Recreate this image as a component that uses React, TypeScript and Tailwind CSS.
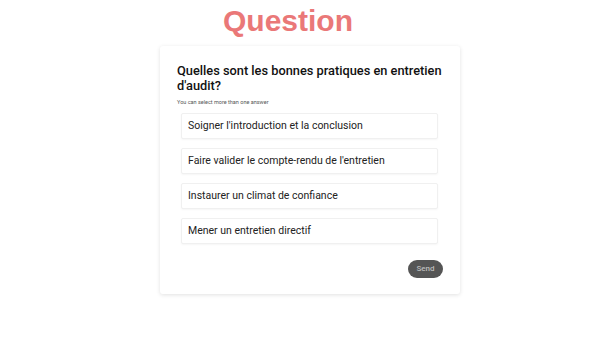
import { useState } from "react";

const options = [
  "Soigner l'introduction et la conclusion",
  "Faire valider le compte-rendu de l'entretien",
  "Instaurer un climat de confiance",
  "Mener un entretien directif",
];

export default function App() {
  const [selected, setSelected] = useState<number[]>([]);

  const toggle = (i: number) =>
    setSelected((s) => (s.includes(i) ? s.filter((x) => x !== i) : [...s, i]));

  return (
    <div className="w-[600px] h-[338px] bg-white overflow-hidden flex flex-col items-center font-['Roboto',sans-serif]">
      {/* Title */}
      <div className="w-full flex justify-center pr-[24px] pt-[2px]">
        <h1 className="font-['Liberation_Sans',Arial,sans-serif] font-bold text-[30px] leading-[38px] text-[#ea7878]">
          Question
        </h1>
      </div>

      {/* Card */}
      <div className="w-full flex justify-center pl-[20px] mt-[6px]">
        <div className="w-[300px] h-[248px] bg-white rounded-[3px] shadow-[0_1px_4px_rgba(0,0,0,0.12)] pl-[17px] pr-[14px] pt-[17px]">
          <p className="text-[12.8px] leading-[15px] font-medium text-[#111]">
            Quelles sont les bonnes pratiques en entretien d'audit?
          </p>
          <p className="text-[5.5px] leading-[8px] text-[#555] mt-[5px]">
            You can select more than one answer
          </p>

          <div className="flex flex-col gap-[9px] mt-[7px] pl-[4px] pr-[8px]">
            {options.map((opt, i) => (
              <button
                key={opt}
                onClick={() => toggle(i)}
                className={`h-[26px] w-full text-left px-[6px] text-[10.5px] text-[#222] rounded-[2px] border border-[#f0f0f0] shadow-[0_1px_2px_rgba(0,0,0,0.04)] ${
                  selected.includes(i) ? "bg-[#fdeaea]" : "bg-white"
                }`}
              >
                {opt}
              </button>
            ))}
          </div>

          <div className="flex justify-end mt-[16px] pr-[3px]">
            <button className="h-[18px] w-[35px] rounded-full bg-[#555] text-[#bdbdbd] text-[8px] font-medium">
              Send
            </button>
          </div>
        </div>
      </div>
    </div>
  );
}
